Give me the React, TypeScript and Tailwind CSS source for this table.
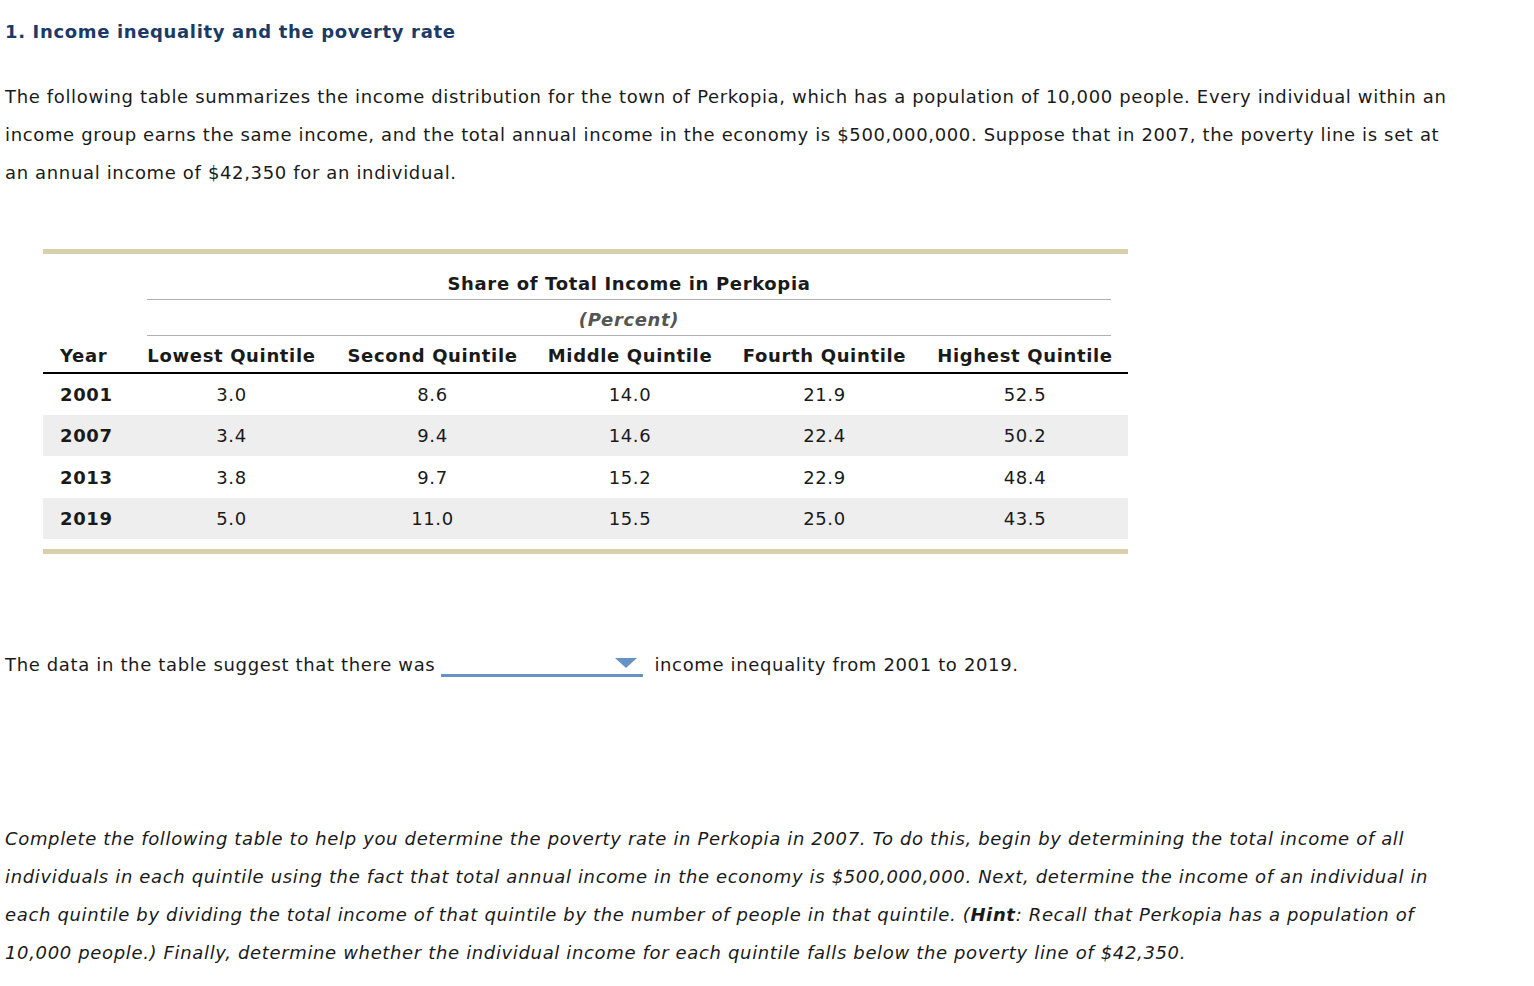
import React from "react";

const rows = [
  { year: "2001", v: ["3.0", "8.6", "14.0", "21.9", "52.5"], shade: false, h: "h-[41px]" },
  { year: "2007", v: ["3.4", "9.4", "14.6", "22.4", "50.2"], shade: true, h: "h-[41px]" },
  { year: "2013", v: ["3.8", "9.7", "15.2", "22.9", "48.4"], shade: false, h: "h-[42px]" },
  { year: "2019", v: ["5.0", "11.0", "15.5", "25.0", "43.5"], shade: true, h: "h-[41px]" },
];

const cols = "grid grid-cols-[88px_201px_201px_194px_195px_206px]";

export default function App() {
  return (
    <div className='w-[1534px] min-h-[986px] bg-white font-["DejaVu_Sans",Verdana,sans-serif] text-[18px] tracking-[0.65px] text-[#1a1a1a] pl-[5px] pt-[20px]'>
      <h1 className="font-bold text-[#1b3a66] leading-[24px] text-[18px]">
        1. Income inequality and the poverty rate
      </h1>

      <div className="mt-[34px] leading-[38px] whitespace-nowrap">
        <div>
          The following table summarizes the income distribution for the town of Perkopia, which has a population of 10,000 people. Every individual within an
        </div>
        <div>
          income group earns the same income, and the total annual income in the economy is $500,000,000. Suppose that in 2007, the poverty line is set at
        </div>
        <div>an annual income of $42,350 for an individual.</div>
      </div>

      <div className="mt-[57px] ml-[38px] w-[1085px]">
        <div className="h-[5px] bg-[#d9cfab]" />
        <div className="flex">
          <div className="w-[88px]" />
          <div className="w-[997px] pl-[16px] pr-[17px]">
            <div className="pt-[19px] pb-[4px] leading-[22px] text-center font-bold border-b border-[#b0b0b0]">
              Share of Total Income in Perkopia
            </div>
            <div className="pt-[9px] pb-[4px] leading-[22px] text-center font-bold italic text-[#555] border-b border-[#b0b0b0]">
              (Percent)
            </div>
          </div>
        </div>
        <div className={`${cols} font-bold leading-[22px] pt-[9px] pb-[5px] border-b-2 border-black`}>
          <div className="pl-[17px]">Year</div>
          <div className="text-center">Lowest Quintile</div>
          <div className="text-center">Second Quintile</div>
          <div className="text-center">Middle Quintile</div>
          <div className="text-center">Fourth Quintile</div>
          <div className="text-center">Highest Quintile</div>
        </div>
        {rows.map((r) => (
          <div
            key={r.year}
            className={`${cols} ${r.h} items-center ${r.shade ? "bg-[#eeeeee]" : "bg-white"}`}
          >
            <div className="pl-[17px] font-bold">{r.year}</div>
            {r.v.map((x, i) => (
              <div key={i} className="text-center">
                {x}
              </div>
            ))}
          </div>
        ))}
        <div className="h-[10px]" />
        <div className="h-[5px] bg-[#d9cfab]" />
      </div>

      <div className="mt-[91px] h-[38px] flex items-center whitespace-nowrap">
        <span>The data in the table suggest that there was</span>
        <span className="relative ml-[6px] mr-[11px] w-[202px] h-[26px] border-b-[3px] border-[#6693c6]">
          <svg
            className="absolute right-[6px] top-[7px]"
            width="22"
            height="10"
            viewBox="0 0 22 10"
          >
            <polygon points="0,0 22,0 11,10" fill="#6693c6" />
          </svg>
        </span>
        <span>income inequality from 2001 to 2019.</span>
      </div>

      <div className="mt-[137px] leading-[38px] italic whitespace-nowrap">
        <div>
          Complete the following table to help you determine the poverty rate in Perkopia in 2007. To do this, begin by determining the total income of all
        </div>
        <div>
          individuals in each quintile using the fact that total annual income in the economy is $500,000,000. Next, determine the income of an individual in
        </div>
        <div>
          each quintile by dividing the total income of that quintile by the number of people in that quintile. (<b className="font-bold">Hint</b>: Recall that Perkopia has a population of
        </div>
        <div>10,000 people.) Finally, determine whether the individual income for each quintile falls below the poverty line of $42,350.</div>
      </div>
    </div>
  );
}
